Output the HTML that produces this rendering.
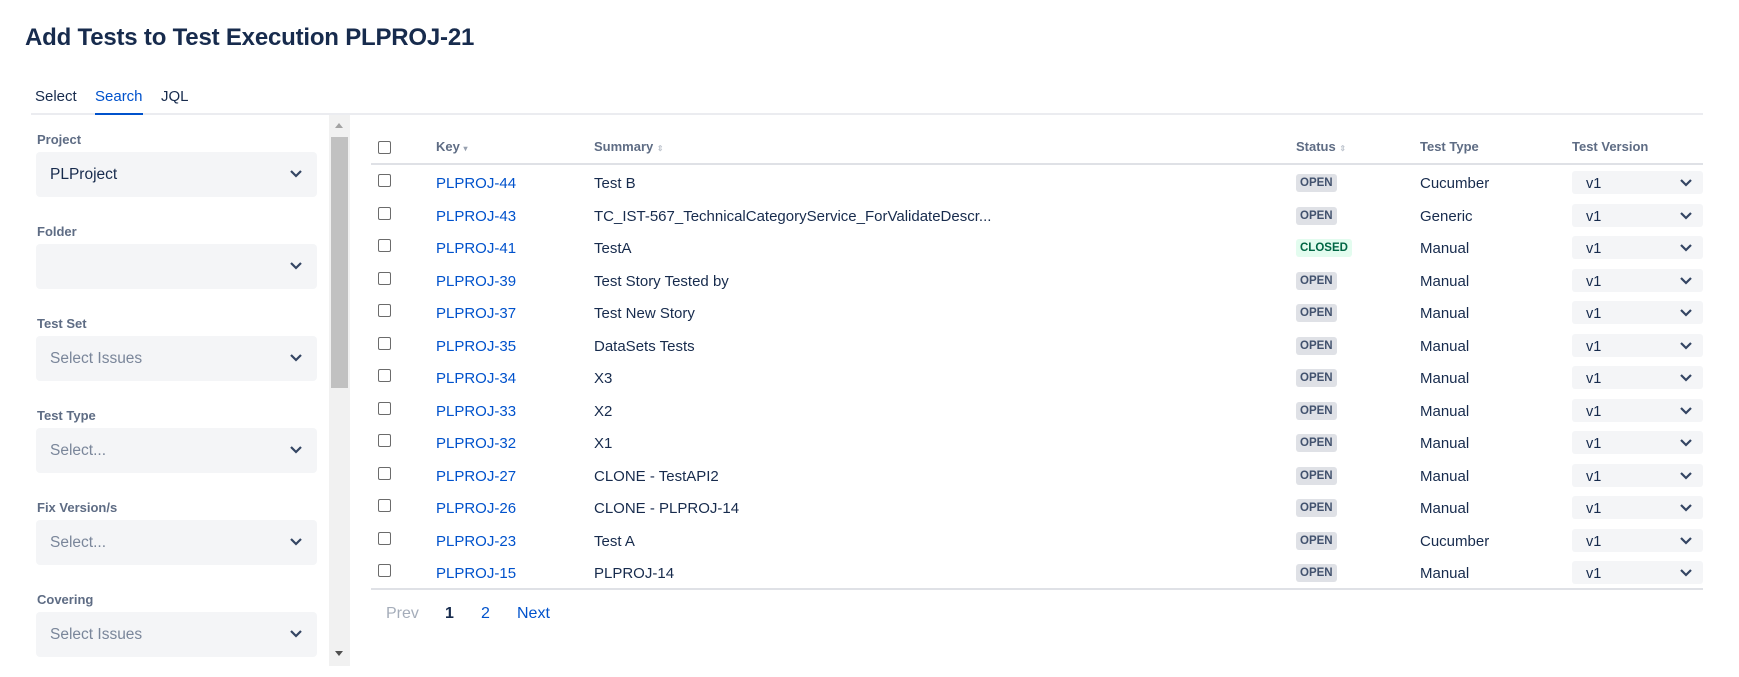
<!DOCTYPE html>
<html><head><meta charset="utf-8"><style>
*{box-sizing:border-box;margin:0;padding:0}
body{width:1739px;height:677px;background:#fff;font-family:"Liberation Sans",sans-serif;color:#172b4d;position:relative;overflow:hidden}
.abs{position:absolute}
h1{position:absolute;left:25px;top:24px;font-size:24px;font-weight:700;color:#172b4d;letter-spacing:-0.2px}
.tab{position:absolute;top:88px;font-size:15px;font-weight:400;color:#172b4d}
.lbl{position:absolute;left:37px;font-size:13px;font-weight:600;color:#5e6c84}
.sel{position:absolute;left:36px;width:281px;height:45px;background:#f4f5f7;border-radius:4px;font-size:15.5px;line-height:45px;padding-left:14px;color:#172b4d}
.sel.ph{color:#7a869a}
.chev{position:absolute;right:14px;top:17px;width:14px;height:9px}
.hdr{position:absolute;top:139px;font-size:13px;font-weight:600;color:#5e6c84}
.cb{position:absolute;left:378px;width:13px;height:13px;border:1.5px solid #6b6b6b;border-radius:2px;background:#fff}
.row{position:absolute;left:0;width:1739px;height:33px;font-size:15px}
.row span{position:absolute;top:9px}
.k{left:436px;color:#0052cc}
.s{left:594px}
.t{left:1420px}
.lz{position:absolute;left:1296px;top:8px;height:18px;line-height:18px;padding:0 4px;font-size:11.5px;font-weight:700;border-radius:3px;background:#dfe1e6;color:#42526e}
.lz.c{background:#e3fcef;color:#006644}
.vs{position:absolute;left:1572px;top:5px;width:131px;height:23px;background:#f4f5f7;border-radius:3px;font-size:14.5px;line-height:26px;padding-left:14px}
.vs svg{position:absolute;right:10px;top:7px}
</style></head><body>
<h1>Add Tests to Test Execution PLPROJ-21</h1>
<div class="tab" style="left:35px">Select</div>
<div class="tab" style="left:95px;color:#0052cc">Search</div>
<div class="tab" style="left:161px">JQL</div>
<div class="abs" style="left:31px;top:113px;width:1672px;height:2px;background:#ebecf0"></div>
<div class="abs" style="left:95px;top:113px;width:48px;height:2px;background:#0052cc"></div>

<div class="lbl" style="top:132px">Project</div>
<div class="sel" style="top:152px">PLProject<svg class="chev" viewBox="0 0 14 9"><path d="M2 2l5 5 5-5" stroke="#344563" stroke-width="2.2" fill="none"/></svg></div>
<div class="lbl" style="top:224px">Folder</div>
<div class="sel" style="top:244px"><svg class="chev" viewBox="0 0 14 9"><path d="M2 2l5 5 5-5" stroke="#344563" stroke-width="2.2" fill="none"/></svg></div>
<div class="lbl" style="top:316px">Test Set</div>
<div class="sel ph" style="top:336px">Select Issues<svg class="chev" viewBox="0 0 14 9"><path d="M2 2l5 5 5-5" stroke="#344563" stroke-width="2.2" fill="none"/></svg></div>
<div class="lbl" style="top:408px">Test Type</div>
<div class="sel ph" style="top:428px">Select...<svg class="chev" viewBox="0 0 14 9"><path d="M2 2l5 5 5-5" stroke="#344563" stroke-width="2.2" fill="none"/></svg></div>
<div class="lbl" style="top:500px">Fix Version/s</div>
<div class="sel ph" style="top:520px">Select...<svg class="chev" viewBox="0 0 14 9"><path d="M2 2l5 5 5-5" stroke="#344563" stroke-width="2.2" fill="none"/></svg></div>
<div class="lbl" style="top:592px">Covering</div>
<div class="sel ph" style="top:612px">Select Issues<svg class="chev" viewBox="0 0 14 9"><path d="M2 2l5 5 5-5" stroke="#344563" stroke-width="2.2" fill="none"/></svg></div>

<div class="abs" style="left:329px;top:115px;width:21px;height:551px;background:#f1f1f1"></div>
<div class="abs" style="left:331px;top:137px;width:17px;height:251px;background:#c1c1c1"></div>
<div class="abs" style="left:335px;top:123px;width:0;height:0;border-left:4px solid transparent;border-right:4px solid transparent;border-bottom:5px solid #a3a3a3"></div>
<div class="abs" style="left:335px;top:651px;width:0;height:0;border-left:4px solid transparent;border-right:4px solid transparent;border-top:5px solid #505050"></div>

<div class="cb" style="top:141px"></div>
<div class="hdr" style="left:436px">Key <span style="font-size:8px;color:#97a0af">▾</span></div>
<div class="hdr" style="left:594px">Summary <span style="font-size:8px;color:#c1c7d0">⇕</span></div>
<div class="hdr" style="left:1296px">Status <span style="font-size:8px;color:#c1c7d0">⇕</span></div>
<div class="hdr" style="left:1420px">Test Type</div>
<div class="hdr" style="left:1572px">Test Version</div>
<div class="abs" style="left:371px;top:163px;width:1332px;height:2px;background:#dfe1e6"></div>

<div class="row" style="top:166px"><div class="cb" style="top:8px"></div><span class="k">PLPROJ-44</span><span class="s">Test B</span><div class="lz">OPEN</div><span class="t">Cucumber</span><div class="vs">v1<svg width="14" height="9"><path d="M2 2l5 5 5-5" stroke="#344563" stroke-width="2.2" fill="none"/></svg></div></div>
<div class="row" style="top:198.5px"><div class="cb" style="top:8px"></div><span class="k">PLPROJ-43</span><span class="s">TC_IST-567_TechnicalCategoryService_ForValidateDescr...</span><div class="lz">OPEN</div><span class="t">Generic</span><div class="vs">v1<svg width="14" height="9"><path d="M2 2l5 5 5-5" stroke="#344563" stroke-width="2.2" fill="none"/></svg></div></div>
<div class="row" style="top:231px"><div class="cb" style="top:8px"></div><span class="k">PLPROJ-41</span><span class="s">TestA</span><div class="lz c">CLOSED</div><span class="t">Manual</span><div class="vs">v1<svg width="14" height="9"><path d="M2 2l5 5 5-5" stroke="#344563" stroke-width="2.2" fill="none"/></svg></div></div>
<div class="row" style="top:263.5px"><div class="cb" style="top:8px"></div><span class="k">PLPROJ-39</span><span class="s">Test Story Tested by</span><div class="lz">OPEN</div><span class="t">Manual</span><div class="vs">v1<svg width="14" height="9"><path d="M2 2l5 5 5-5" stroke="#344563" stroke-width="2.2" fill="none"/></svg></div></div>
<div class="row" style="top:296px"><div class="cb" style="top:8px"></div><span class="k">PLPROJ-37</span><span class="s">Test New Story</span><div class="lz">OPEN</div><span class="t">Manual</span><div class="vs">v1<svg width="14" height="9"><path d="M2 2l5 5 5-5" stroke="#344563" stroke-width="2.2" fill="none"/></svg></div></div>
<div class="row" style="top:328.5px"><div class="cb" style="top:8px"></div><span class="k">PLPROJ-35</span><span class="s">DataSets Tests</span><div class="lz">OPEN</div><span class="t">Manual</span><div class="vs">v1<svg width="14" height="9"><path d="M2 2l5 5 5-5" stroke="#344563" stroke-width="2.2" fill="none"/></svg></div></div>
<div class="row" style="top:361px"><div class="cb" style="top:8px"></div><span class="k">PLPROJ-34</span><span class="s">X3</span><div class="lz">OPEN</div><span class="t">Manual</span><div class="vs">v1<svg width="14" height="9"><path d="M2 2l5 5 5-5" stroke="#344563" stroke-width="2.2" fill="none"/></svg></div></div>
<div class="row" style="top:393.5px"><div class="cb" style="top:8px"></div><span class="k">PLPROJ-33</span><span class="s">X2</span><div class="lz">OPEN</div><span class="t">Manual</span><div class="vs">v1<svg width="14" height="9"><path d="M2 2l5 5 5-5" stroke="#344563" stroke-width="2.2" fill="none"/></svg></div></div>
<div class="row" style="top:426px"><div class="cb" style="top:8px"></div><span class="k">PLPROJ-32</span><span class="s">X1</span><div class="lz">OPEN</div><span class="t">Manual</span><div class="vs">v1<svg width="14" height="9"><path d="M2 2l5 5 5-5" stroke="#344563" stroke-width="2.2" fill="none"/></svg></div></div>
<div class="row" style="top:458.5px"><div class="cb" style="top:8px"></div><span class="k">PLPROJ-27</span><span class="s">CLONE - TestAPI2</span><div class="lz">OPEN</div><span class="t">Manual</span><div class="vs">v1<svg width="14" height="9"><path d="M2 2l5 5 5-5" stroke="#344563" stroke-width="2.2" fill="none"/></svg></div></div>
<div class="row" style="top:491px"><div class="cb" style="top:8px"></div><span class="k">PLPROJ-26</span><span class="s">CLONE - PLPROJ-14</span><div class="lz">OPEN</div><span class="t">Manual</span><div class="vs">v1<svg width="14" height="9"><path d="M2 2l5 5 5-5" stroke="#344563" stroke-width="2.2" fill="none"/></svg></div></div>
<div class="row" style="top:523.5px"><div class="cb" style="top:8px"></div><span class="k">PLPROJ-23</span><span class="s">Test A</span><div class="lz">OPEN</div><span class="t">Cucumber</span><div class="vs">v1<svg width="14" height="9"><path d="M2 2l5 5 5-5" stroke="#344563" stroke-width="2.2" fill="none"/></svg></div></div>
<div class="row" style="top:556px"><div class="cb" style="top:8px"></div><span class="k">PLPROJ-15</span><span class="s">PLPROJ-14</span><div class="lz">OPEN</div><span class="t">Manual</span><div class="vs">v1<svg width="14" height="9"><path d="M2 2l5 5 5-5" stroke="#344563" stroke-width="2.2" fill="none"/></svg></div></div>
<div class="abs" style="left:371px;top:588px;width:1332px;height:2px;background:#dfe1e6"></div>

<div class="abs" style="left:386px;top:605px;font-size:16px;color:#a5adba">Prev</div>
<div class="abs" style="left:445px;top:605px;font-size:16px;color:#172b4d;font-weight:600">1</div>
<div class="abs" style="left:481px;top:605px;font-size:16px;color:#0052cc">2</div>
<div class="abs" style="left:517px;top:605px;font-size:16px;color:#0052cc">Next</div>
</body></html>
